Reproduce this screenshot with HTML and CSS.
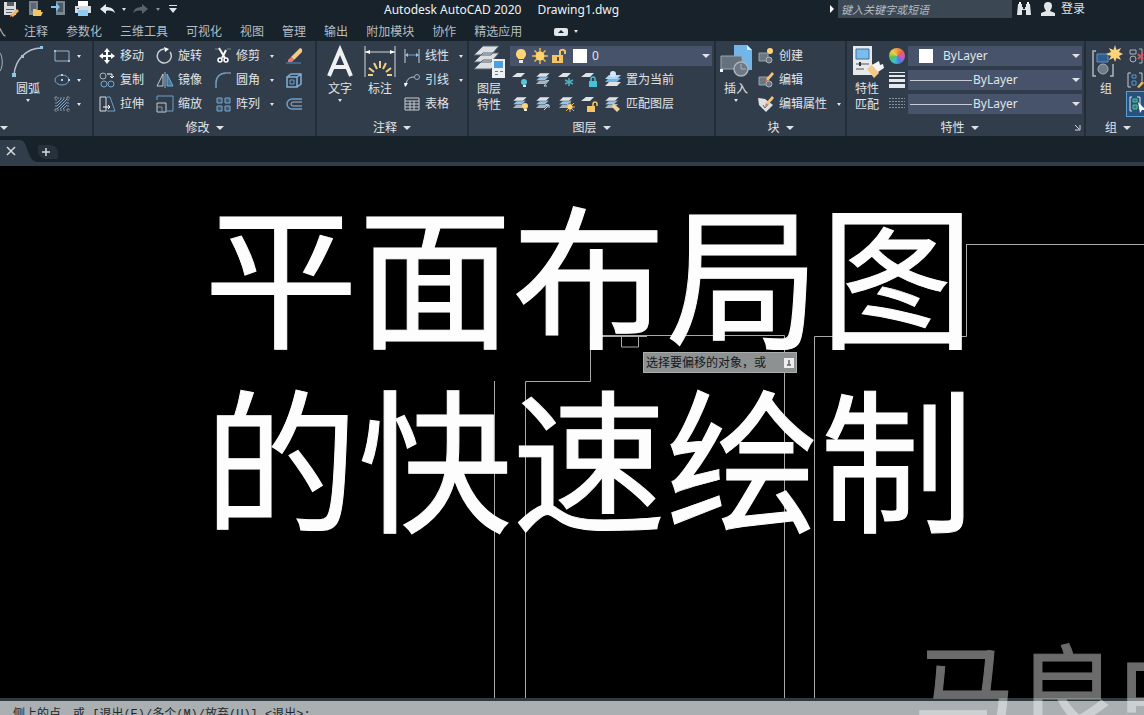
FILE: index.html
```html
<!DOCTYPE html>
<html lang="zh-CN">
<head>
    <meta charset="UTF-8">
    <meta name="viewport" content="width=device-width, initial-scale=1.0">
    <title>Autodesk AutoCAD 2020 Drawing1.dwg</title>
    <link rel="stylesheet" href="styles.css">
</head>
<body>
    <svg class="defs" aria-hidden="true">
        <symbol id="sheets" viewBox="0 0 18 18">
            <path d="M1 13l4-4h9l-4 4z" fill="#aeb6bd"/>
            <path d="M1 9.500l4-4h9l-4 4z" fill="#8ec6f0" stroke="#3a4656" stroke-width=".5"/>
            <path d="M1 6l4-4h10l-4 4z" fill="#e0e3e5" stroke="#3a4656" stroke-width=".5"/>
        </symbol>
        <symbol id="sheet" viewBox="0 0 18 18">
            <path d="M0 6l5-4h8l-4 4z" fill="#e0e3e5"/>
        </symbol>
        <symbol id="bulb" viewBox="0 0 18 18">
            <path d="M9 2a5 5 0 0 1 3 9v1H6v-1a5 5 0 0 1 3-9z" fill="#ffd577"/>
            <path d="M7 13h4v3H7z" fill="#e6e9eb"/>
        </symbol>
        <symbol id="sun" viewBox="0 0 18 18">
            <path d="M9 1v16M1 9h16M3.500 3.500l11 11M14.500 3.500l-11 11" stroke="#f2b84c" stroke-width="1.500"/>
            <circle cx="9" cy="9" r="4.500" fill="#ffd36b"/>
        </symbol>
        <symbol id="lock" viewBox="0 0 18 18">
            <path d="M10 8V4a3 3 0 0 1 5 0v3" fill="none" stroke="#f3c567" stroke-width="2"/>
            <path d="M2 8h11v8H2z" fill="#f3c567"/>
            <path d="M7 10h2v4H7z" fill="#5c5040"/>
        </symbol>
        <symbol id="pen" viewBox="0 0 18 18">
            <path d="M9 8l6-7 2 2-6 7z" fill="#f3c37a"/>
            <path d="M8 11l1-3 2 2z" fill="#e66a54"/>
        </symbol>
    </svg>

    <header class="titlebar">
        <div class="quick">
            <button aria-label="保存">
                <svg width="18" height="18" viewBox="0 0 18 18"><path d="M2 2h12v13H2z" fill="#d9dcdf"/><path d="M5 2h7v4H5zM4 9h8v1H4zM4 12h6v1H4z" fill="#55606b"/><path d="M8 15l7-6 2 2-6 6z" fill="#f0b565"/><path d="M8 17v-2l2 1z" fill="#e8705a"/></svg>
            </button>
            <button aria-label="打开">
                <svg width="18" height="18" viewBox="0 0 18 18"><path d="M3 1h9v14H3z" fill="#77828c"/><path d="M5 3h5v8H5z" fill="#5b6670"/><path d="M7 16V9h3l1 1h4v2h2l-2 4z" fill="#f3c567"/></svg>
            </button>
            <button aria-label="输入">
                <svg width="18" height="18" viewBox="0 0 18 18"><path d="M6 1h9v14H6z" fill="#7b8791"/><path d="M8 3h5v9H8z" fill="#4d5862"/><path d="M1 6h5V3l4 4-4 4V8H1z" fill="#7fc3ee"/></svg>
            </button>
            <button aria-label="打印">
                <svg width="18" height="18" viewBox="0 0 18 18"><path d="M4 1h10v5H4z" fill="#fff"/><path d="M1 6h16v7H1z" fill="#d5dade"/><path d="M4 10h10v6H4z" fill="#8fcaf2"/><path d="M3 8h2v1H3z" fill="#555"/></svg>
            </button>
            <button aria-label="放弃">
                <svg width="18" height="18" viewBox="0 0 18 18"><path d="M2 9l6-5v3c5 0 8 2 9 6-2-2-5-3-9-2v3z" fill="#e8ebed"/></svg>
            </button>
            <i class="down"></i>
            <button aria-label="重做">
                <svg width="18" height="18" viewBox="0 0 18 18"><path d="M16 9l-6-5v3c-5 0-8 2-9 6 2-2 5-3 9-2v3z" fill="#59636c"/></svg>
            </button>
            <i class="down dim"></i>
            <button class="custom" aria-label="自定义">
                <svg width="10" height="10" viewBox="0 0 10 10"><path d="M1 1h8v1H1zM1 4h8L5 9z" fill="#dfe3e6"/></svg>
            </button>
        </div>
        <div class="caption"><span>Autodesk AutoCAD 2020</span><span>Drawing1.dwg</span></div>
        <form class="search">
            <i class="right"></i>
            <input type="text" aria-label="搜索" placeholder="键入关键字或短语">
            <button type="button" aria-label="查找">
                <svg width="16" height="16" viewBox="0 0 16 16"><path d="M2 3h4v3h4V3h4l1 11h-5V9H6v5H1z" fill="#e3e6e8"/><path d="M3 1h2v2H3zM11 1h2v2h-2z" fill="#fff"/><path d="M7 6h2v2H7z" fill="#17222b"/></svg>
            </button>
            <button type="button" class="login">
                <svg width="16" height="16" viewBox="0 0 16 16"><path d="M4 5a4 4 0 0 1 8 0c0 3-2 4-2 5l5 2v3H1v-3l5-2c0-1-2-2-2-5z" fill="#e3e6e8"/></svg>
                登录
            </button>
        </form>
    </header>

    <nav class="tabs">
        <a href="#">插入</a>
        <a href="#">注释</a>
        <a href="#">参数化</a>
        <a href="#">三维工具</a>
        <a href="#">可视化</a>
        <a href="#">视图</a>
        <a href="#">管理</a>
        <a href="#">输出</a>
        <a href="#">附加模块</a>
        <a href="#">协作</a>
        <a href="#">精选应用</a>
        <button class="fold" aria-label="最小化功能区">
            <svg width="14" height="8" viewBox="0 0 14 8"><rect width="14" height="8" rx="2" fill="#e3e6e8"/><path d="M4 5h6L7 2z" fill="#17222b"/></svg>
            <i class="down"></i>
        </button>
    </nav>

    <section class="ribbon">
        <div class="panel draw">
            <div class="tools">
                <svg class="edge" width="4" height="24" viewBox="0 0 4 24"><path d="M0 3c3 4 3 14 0 18" fill="none" stroke="#aab4bd"/></svg>
                <button class="big">
                    <svg width="34" height="34" viewBox="0 0 34 34"><path d="M3 31C4 17 14 4 31 4" fill="none" stroke="#b7c0c8" stroke-width="1.500"/><path d="M1 29h4v4H1zM10 11h3v3h-3zM29 2h3v3h-3z" fill="#8fc4ea"/></svg>
                    圆弧<i class="down"></i>
                </button>
                <div class="rows">
                    <button aria-label="矩形"><svg width="18" height="18" viewBox="0 0 18 18"><path d="M2 4h14v10H2z" fill="none" stroke="#9fb2c4"/><path d="M1 3h2v2H1zM15 13h2v2h-2z" fill="#8fc4ea"/></svg><i class="down"></i></button>
                    <button aria-label="椭圆"><svg width="18" height="18" viewBox="0 0 18 18"><ellipse cx="9" cy="9" rx="7" ry="5" fill="none" stroke="#7fa3c4"/><path d="M8 8h2v2H8zM8 3h2v2H8zM15 8h2v2h-2z" fill="#a5d3f3"/></svg><i class="down"></i></button>
                    <button aria-label="图案填充"><svg width="18" height="18" viewBox="0 0 18 18"><path d="M3 1v16M15 1v16M1 3h16M1 15h16" stroke="#8795a3" stroke-dasharray="2 1"/><path d="M4 8l4-4M4 11l7-7M4 14L14 4M7 14l7-7M10 14l4-4" stroke="#78aad2"/></svg><i class="down"></i></button>
                </div>
            </div>
            <div class="name"><i class="down wide"></i></div>
        </div>

        <div class="panel modify">
            <div class="tools">
                <div class="rows">
                    <button><svg width="18" height="18" viewBox="0 0 18 18"><path d="M9 1l3 4h-2v3h3V6l4 3-4 3v-2h-3v3h2l-3 4-3-4h2v-3H5v2L1 9l4-3v2h3V5H6z" fill="#fff"/></svg>移动</button>
                    <button><svg width="18" height="18" viewBox="0 0 18 18"><g fill="none" stroke="#a9b5bf"><circle cx="5" cy="5" r="3"/><circle cx="6" cy="13" r="3" stroke="#75a9d3"/><circle cx="13" cy="13" r="3" stroke="#75a9d3"/><path d="M9 3h5v4M12 5l2 2 2-2" stroke="#fff"/></g></svg>复制</button>
                    <button><svg width="18" height="18" viewBox="0 0 18 18"><path d="M2 2h6v14H2z" fill="none" stroke="#d8dde1"/><path d="M9 2h3l5 14H9" fill="none" stroke="#6ba0cb"/><path d="M5 12h7M10 10l2 2-2 2" fill="none" stroke="#fff"/></svg>拉伸</button>
                </div>
                <div class="rows">
                    <button><svg width="18" height="18" viewBox="0 0 18 18"><path d="M14 5a7 7 0 1 1-6-3" fill="none" stroke="#c5ccd2" stroke-width="1.500"/><path d="M8 0l5 2-4 3z" fill="#fff"/></svg>旋转</button>
                    <button><svg width="18" height="18" viewBox="0 0 18 18"><path d="M7 3v12H1z" fill="none" stroke="#c5ccd2"/><path d="M11 3v12h6z" fill="#42749c" stroke="#78afd8"/><path d="M9 1v16" stroke="#9db9d0"/></svg>镜像</button>
                    <button><svg width="18" height="18" viewBox="0 0 18 18"><path d="M1 5V1h16v15h-6" fill="none" stroke="#6ba0cb"/><path d="M1 8h9v9H1z" fill="none" stroke="#c5ccd2"/><path d="M1 12h5v5" fill="none" stroke="#8995a1"/></svg>缩放</button>
                </div>
                <div class="rows trim">
                    <button><svg width="18" height="18" viewBox="0 0 18 18"><path d="M1 2h4M13 2h4" stroke="#75889a"/><path d="M5 1l6 10M12 3L8 11" stroke="#f4f6f7" stroke-width="2"/><circle cx="6" cy="13" r="2" fill="none" stroke="#fff" stroke-width="1.500"/><circle cx="12" cy="13" r="2" fill="none" stroke="#fff" stroke-width="1.500"/></svg>修剪<i class="down"></i></button>
                    <button><svg width="18" height="18" viewBox="0 0 18 18"><path d="M2 17v-5C2 6 6 2 12 2" fill="none" stroke="#6ba0cb" stroke-width="1.500"/><path d="M12 2h5" stroke="#aab5bf"/></svg>圆角<i class="down"></i></button>
                    <button><svg width="18" height="18" viewBox="0 0 18 18"><g fill="#3c5873" stroke="#78a6cc"><path d="M3 3h5v5H3zM11 3h5v5h-5zM3 11h5v5H3zM11 11h5v5h-5z"/></g></svg>阵列<i class="down"></i></button>
                </div>
                <div class="rows erase">
                    <button aria-label="删除"><svg width="18" height="18" viewBox="0 0 18 18"><path d="M6 10l9-9 2 1v3l-8 8z" fill="#f4cb84"/><path d="M6 10l3 3-2 2H3v-2z" fill="#e77b76"/><path d="M1 16h15" stroke="#4d8fc7"/></svg></button>
                    <button aria-label="分解"><svg width="18" height="18" viewBox="0 0 18 18"><path d="M2 6h10v10H2zM2 6l4-3h10v10l-4 3M12 6l4-3" fill="none" stroke="#80b0d5" stroke-width="1.500"/><path d="M5 9h4v4H5z" fill="none" stroke="#6ba0cb"/></svg></button>
                    <button aria-label="偏移"><svg width="18" height="18" viewBox="0 0 18 18"><path d="M17 4H7a5 5 0 0 0 0 10h10" fill="none" stroke="#6ba0cb" stroke-width="1.500"/><path d="M17 7H8a2 2 0 0 0 0 4h9" fill="none" stroke="#aab5bf"/></svg></button>
                </div>
            </div>
            <div class="name">修改<i class="down wide"></i></div>
        </div>

        <div class="panel annotate">
            <div class="tools">
                <button class="big">
                    <svg width="34" height="34" viewBox="0 0 34 34"><path d="M6 32L17 6l11 26M10 23h14" fill="none" stroke="#eef0f2" stroke-width="4"/></svg>
                    文字<i class="down"></i>
                </button>
                <button class="big">
                    <svg width="34" height="34" viewBox="0 0 34 34"><path d="M2 2v31M32 2v31M2 8h30" stroke="#d4d9dd"/><path d="M2 8l5-2v4zM32 8l-5-2v4z" fill="#fff"/><path d="M17 17v7M11 19l3 6M23 19l-3 6M6 24l5 4M28 24l-5 4M5 31h5M24 31h5" stroke="#f1cf87" stroke-width="2"/></svg>
                    标注
                </button>
                <div class="rows">
                    <button><svg width="18" height="18" viewBox="0 0 18 18"><path d="M2 2v14M16 2v14" stroke="#c6ccd1"/><path d="M3 8h12" stroke="#6ba0cb"/><path d="M2 8l3-2v4zM16 8l-3-2v4z" fill="#8fc4ea"/></svg>线性<i class="down"></i></button>
                    <button><svg width="18" height="18" viewBox="0 0 18 18"><path d="M3 15c0-6 3-9 8-9" fill="none" stroke="#c6ccd1"/><circle cx="14" cy="6" r="2.500" fill="none" stroke="#8fb0cb"/><path d="M1 12h4l-3 4z" fill="#fff"/></svg>引线<i class="down"></i></button>
                    <button><svg width="18" height="18" viewBox="0 0 18 18"><path d="M2 3h14v12H2zM2 6h14M2 9h14M2 12h14M7 6v9M11 6v9" fill="none" stroke="#c6ccd1"/></svg>表格</button>
                </div>
            </div>
            <div class="name">注释<i class="down wide"></i></div>
        </div>

        <div class="panel layers">
            <div class="tools">
                <button class="big">
                    <svg width="34" height="34" viewBox="0 0 34 34"><path d="M2 25l9-9h16l-8 9zM2 18l9-9h16l-8 9zM2 11l9-9h16l-8 9z" fill="#dcdfe1" stroke="#596470"/><path d="M20 15h13v19H20z" fill="#edf1f3"/><path d="M22 17h9v7h-9z" fill="#4c9fe0"/><path d="M23 27h3v1h-3zM28 27h3v1h-3zM23 30h3v1h-3z" fill="#6c757d"/></svg>
                    图层<br>特性
                </button>
                <div class="rows">
                    <div class="combo">
                        <svg width="18" height="18"><use href="#bulb"/></svg>
                        <svg width="18" height="18"><use href="#sun"/></svg>
                        <svg width="18" height="18"><use href="#lock"/></svg>
                        <i class="swatch"></i>
                        <select aria-label="图层"><option>0</option></select>
                        <i class="down wide"></i>
                    </div>
                    <div class="line">
                        <button aria-label="关"><svg width="18" height="18" viewBox="0 0 18 18"><use href="#sheet"/><circle cx="12" cy="11" r="3" fill="#5cc6d8"/><path d="M11 14h3v2h-3z" fill="#dce5e8"/></svg></button>
                        <button aria-label="隔离"><svg width="18" height="18" viewBox="0 0 18 18"><use href="#sheets"/><path d="M9 15l5-6M9 15h3" stroke="#b8daf4" fill="none"/></svg></button>
                        <button aria-label="冻结"><svg width="18" height="18" viewBox="0 0 18 18"><use href="#sheet"/><path d="M11 7v8M7 9l8 4M15 9l-8 4" stroke="#4fb0bf" stroke-width="1.500"/></svg></button>
                        <button aria-label="锁定"><svg width="18" height="18" viewBox="0 0 18 18"><use href="#sheet"/><path d="M8 10h8v6H8z" fill="#45c3d6"/><path d="M10 10V8a2 2 0 0 1 4 0v2" fill="none" stroke="#45c3d6" stroke-width="1.500"/></svg></button>
                        <button><svg width="18" height="18" viewBox="0 0 18 18"><path d="M1 15l4-4h12l-4 4z" fill="#e0e3e5"/><path d="M1 11l4-4h12l-4 4z" fill="#70b5ea"/><path d="M1 8l4-4h12l-4 4z" fill="#b3d7f2"/><circle cx="9" cy="3" r="3" fill="#d4eafa"/></svg>置为当前</button>
                    </div>
                    <div class="line">
                        <button aria-label="打开所有图层"><svg width="18" height="18" viewBox="0 0 18 18"><use href="#sheets"/><circle cx="13" cy="11" r="3" fill="#ffd577"/><path d="M12 14h3v2h-3z" fill="#eee"/></svg></button>
                        <button aria-label="取消隔离"><svg width="18" height="18" viewBox="0 0 18 18"><use href="#sheets"/><path d="M9 15l5-5M11 10h3v3" stroke="#b8daf4" fill="none"/></svg></button>
                        <button aria-label="解冻"><svg width="18" height="18" viewBox="0 0 18 18"><use href="#sheets"/><path d="M12 7v10M7 12h10M8 8l8 8M16 8l-8 8" stroke="#eeb54e"/><circle cx="12" cy="12" r="2.500" fill="#ffd577"/></svg></button>
                        <button aria-label="解锁"><svg width="18" height="18" viewBox="0 0 18 18"><use href="#sheet"/><path d="M6 11h8v6H6z" fill="#f3c567"/><path d="M12 11V9a2 2 0 0 1 4 0v2" fill="none" stroke="#f3c567" stroke-width="1.500"/></svg></button>
                        <button><svg width="18" height="18" viewBox="0 0 18 18"><use href="#sheets"/><path d="M9 8l7 6-3 3-5-5z" fill="#edd19b"/></svg>匹配图层</button>
                    </div>
                </div>
            </div>
            <div class="name">图层<i class="down wide"></i></div>
        </div>

        <div class="panel block">
            <div class="tools">
                <button class="big">
                    <svg width="34" height="34" viewBox="0 0 34 34"><path d="M15 1h13l5 5v20H15z" fill="#72b5e8"/><path d="M28 1v5h5z" fill="#d9eefc"/><path d="M2 12h21v13H2z" fill="#65717c" stroke="#9da8b1"/><circle cx="22" cy="25" r="7" fill="#6c7883" stroke="#aab4bc" stroke-width="1.500"/><path d="M22 20v5h5" fill="none" stroke="#aab4bc"/><path d="M1 25h3v3H1z" fill="#eef6fc"/></svg>
                    插入<i class="down"></i>
                </button>
                <div class="rows">
                    <button><svg width="18" height="18" viewBox="0 0 18 18"><path d="M2 6h9v8H2z" fill="#6c7782" stroke="#99a4ae"/><circle cx="12" cy="13" r="3" fill="#697580" stroke="#aab4bc"/><circle cx="13" cy="4" r="3" fill="#ffd577"/></svg>创建</button>
                    <button><svg width="18" height="18" viewBox="0 0 18 18"><path d="M2 6h9v8H2z" fill="#6c7782" stroke="#99a4ae"/><circle cx="12" cy="13" r="3" fill="#697580" stroke="#aab4bc"/><use href="#pen"/></svg>编辑</button>
                    <button><svg width="18" height="18" viewBox="0 0 18 18"><path d="M1 3l7 1 8 6-7 7-7-7z" fill="#dce0e3"/><path d="M6 10l2 3 4-5" fill="none" stroke="#56616c"/><use href="#pen"/></svg>编辑属性<i class="down"></i></button>
                </div>
            </div>
            <div class="name">块<i class="down wide"></i></div>
        </div>

        <div class="panel props">
            <div class="tools">
                <button class="big">
                    <svg width="34" height="34" viewBox="0 0 34 34"><path d="M3 2h19v29H3z" fill="#e7e9eb"/><path d="M6 5h13v10H6z" fill="#79bdf0" stroke="#3e6f99"/><path d="M6 20h13M6 25h8" stroke="#4a545e"/><path d="M9 18h2v4H9z" fill="#333"/><path d="M17 25l6-5 6 9-5 5z" fill="#f3c98a"/><path d="M22 21l7-4 1 4 3-1 1 4-6 4z" fill="#f4f4f4"/></svg>
                    特性<br>匹配
                </button>
                <div class="marks">
                    <i class="wheel"></i>
                    <svg width="18" height="18" viewBox="0 0 18 18"><path d="M1 1h16v1H1zM1 4h16v2H1zM1 8h16v3H1zM1 13h16v4H1z" fill="#e6e9eb"/></svg>
                    <svg width="18" height="18" viewBox="0 0 18 18"><path d="M1 3.500h16M1 6.500h16M1 9.500h16M1 12.500h16" stroke="#85909a" stroke-dasharray="2 1"/></svg>
                </div>
                <div class="rows">
                    <div class="combo">
                        <i class="swatch"></i>
                        <select aria-label="颜色"><option>ByLayer</option></select>
                        <i class="down wide"></i>
                    </div>
                    <div class="combo">
                        <i class="stroke"></i>
                        <select aria-label="线宽"><option>ByLayer</option></select>
                        <i class="down wide"></i>
                    </div>
                    <div class="combo">
                        <i class="stroke"></i>
                        <select aria-label="线型"><option>ByLayer</option></select>
                        <i class="down wide"></i>
                    </div>
                </div>
            </div>
            <div class="name">特性<i class="down wide"></i>
                <svg class="launch" width="7" height="7" viewBox="0 0 7 7"><path d="M1 1l4 4M6 1v5H1" fill="none" stroke="#d5dade"/></svg>
            </div>
        </div>

        <div class="panel group">
            <div class="tools">
                <button class="big">
                    <svg width="34" height="34" viewBox="0 0 34 34"><path d="M7 7H4v25h3M21 32h3V20" fill="none" stroke="#aeb7bf" stroke-width="1.500"/><path d="M8 10h11v8H8z" fill="#315e91" stroke="#5d93c9"/><circle cx="14" cy="25" r="5" fill="#6f7b86" stroke="#a5afb8"/><path d="M26 1l1.500 5L32 4l-2 4 4 2-4 2 2 4-4.500-2L26 18l-1.500-4-4.500 2 2-4-5-2 5-2-2-4 4.500 2z" fill="#ffd27c"/></svg>
                    组
                </button>
                <div class="rows">
                    <button aria-label="解除编组"><svg width="18" height="18" viewBox="0 0 18 18"><path d="M3 3h6v4H3zM12 2h3v14h-3" fill="none" stroke="#a9b4bd"/><circle cx="6" cy="12" r="3" fill="none" stroke="#a9b4bd"/><path d="M11 7l5 5M16 7l-5 5" stroke="#e14d56" stroke-width="2"/></svg></button>
                    <button aria-label="组编辑"><svg width="18" height="18" viewBox="0 0 18 18"><path d="M4 2H1v14h3M12 2h3v8" fill="none" stroke="#c4cbd1"/><path d="M5 4h4v3H5zM5 10h4v4H5z" fill="none" stroke="#4f9bd8"/><path d="M10 16l5-6 2 2-5 5z" fill="#f3b35f"/></svg></button>
                    <button class="on" aria-label="组选择"><svg width="18" height="18" viewBox="0 0 18 18"><path d="M5 2H3v14h2M10 2h3v8" fill="none" stroke="#dbe5ec"/><path d="M6 4h4v3H6zM6 10h4v4H6z" fill="#2d7d6c" stroke="#4fc09a"/><path d="M11 7l8 8h-4l-2 3z" fill="#fff"/></svg></button>
                </div>
            </div>
            <div class="name">组<i class="down wide"></i></div>
        </div>
    </section>

    <div class="files">
        <button class="file" aria-label="关闭">
            <svg width="10" height="10" viewBox="0 0 10 10"><path d="M1 1l8 8M9 1L1 9" stroke="#d5dade" stroke-width="1.500"/></svg>
        </button>
        <button class="add" aria-label="新图形">
            <svg width="10" height="10" viewBox="0 0 10 10"><path d="M5 1v8M1 5h8" stroke="#d5dade" stroke-width="1.500"/></svg>
        </button>
    </div>

    <main class="canvas">
        <svg class="plan" width="100%" height="100%">
            <g fill="none" stroke="#a8a8a8">
                <path d="M494.500 215v600"/>
                <path d="M525.500 815V215.500H590.500V169.500H784.500V815"/>
                <path d="M814.500 815V170.500H966.500V78.500"/>
                <line x1="966" y1="78.500" x2="100%" y2="78.500"/>
                <path d="M621.500 170v11h17v-11"/>
                <path d="M590 170h57" stroke-width="2"/>
            </g>
        </svg>
        <h1>平面布局图<br>的快速绘制</h1>
        <div class="tip">选择要偏移的对象，或
            <svg width="10" height="10" viewBox="0 0 10 10"><path d="M0 0h10v10H0z" fill="#eee"/><path d="M5 2v5M3 7h4" stroke="#666" stroke-width="1.500"/></svg>
        </div>
    </main>

    <footer class="command">侧上的点，或 [退出(E)/多个(M)/放弃(U)] &lt;退出&gt;:</footer>
    <div class="watermark">马良中</div>
</body>
</html>
```

FILE: styles.css
```css
*{
    box-sizing: border-box;
    margin: 0;
    padding: 0;
}
body{
    position: relative;
    height: 100vh;
    display: flex;
    flex-direction: column;
    overflow: hidden;
    background-color: #17222b;
    color: #e0e4e7;
    font-family: "Noto Sans", "Noto Sans CJK SC", sans-serif;
    font-size: 12px;
    line-height: 16px;
}
button, input, select{
    font: inherit;
    color: inherit;
    background: none;
    border: none;
    outline: none;
}
button{
    display: flex;
    align-items: center;
    white-space: nowrap;
}
svg{
    flex: none;
    display: block;
}
.defs{
    position: absolute;
    width: 0;
    height: 0;
}

/* small triangles */
.down, .right{
    flex: none;
    width: 0;
    height: 0;
    border: 2px solid transparent;
    border-top: 3px solid #dfe3e6;
    border-bottom: none;
}
.down.wide{
    border-width: 4px;
    border-bottom: none;
}
.down.dim{
    border-top-color: #87919a;
}
.right{
    border: 4px solid transparent;
    border-left-color: #fff;
    border-right: none;
}

.titlebar{
    flex: none;
    height: 22px;
    display: flex;
    align-items: flex-start;
}
.quick{
    flex: none;
    width: 384px;
    height: 18px;
    padding-left: 2px;
    display: flex;
    align-items: center;
    gap: 6px;
}
.custom{
    margin-left: 2px;
}
.caption{
    display: flex;
    gap: 16px;
    line-height: 20px;
    color: #f0f2f3;
    white-space: nowrap;
}
.search{
    height: 18px;
    margin-left: auto;
    padding-right: 59px;
    display: flex;
    align-items: center;
    gap: 4px;
}
.search input{
    width: 174px;
    height: 18px;
    padding: 0 3px;
    background-color: #3b4854;
    font-size: 11px;
    font-style: italic;
}
.search input::placeholder{
    color: #b4bcc3;
}
.login{
    margin-left: 4px;
    gap: 5px;
}

.tabs{
    flex: none;
    height: 19px;
    margin-left: -18px;
    display: flex;
    align-items: center;
    gap: 18px;
}
.tabs a{
    color: #b5bdc4;
    text-decoration: none;
    white-space: nowrap;
}
.fold{
    margin-left: 14px;
    gap: 6px;
}

.ribbon{
    flex: none;
    display: flex;
    background-color: #323d4b;
}
.panel{
    flex: none;
    border-right: 2px solid #222d38;
    overflow: hidden;
}
.tools{
    height: 78px;
    padding-top: 3px;
    display: flex;
}
.name{
    position: relative;
    height: 17px;
    display: flex;
    align-items: center;
    justify-content: center;
    gap: 6px;
}
.rows, .marks{
    display: grid;
    grid-template-rows: repeat(3, 24px);
    align-content: start;
    align-items: center;
}
.rows button{
    height: 24px;
    gap: 4px;
}
.rows .down:not(.wide){
    margin-left: 6px;
}
.big{
    flex: none;
    width: 40px;
    height: 72px;
    flex-direction: column;
}
.big svg{
    margin-bottom: 3px;
}
.big .down{
    margin-top: 2px;
}
.draw{
    width: 94px;
}
.draw .edge{
    margin-top: 6px;
}
.draw .big{
    width: 48px;
}
.draw .rows{
    padding-left: 1px;
}
.draw .rows button{
    gap: 0;
}
.draw .name{
    justify-content: flex-start;
}
.modify{
    width: 223px;
}
.modify .tools{
    padding-left: 4px;
}
.modify .rows{
    flex: none;
    width: 58px;
}
.modify .trim{
    width: 71px;
}
.modify .erase{
    width: 20px;
}
.annotate{
    width: 152px;
}
.annotate .tools{
    padding-left: 3px;
}
.annotate .rows{
    padding-left: 3px;
}
.layers{
    width: 247px;
}
.layers .rows{
    flex: 1;
    padding: 0 2px 0 1px;
}
.line{
    display: flex;
    gap: 5px;
    padding-left: 2px;
}
.combo{
    height: 20px;
    padding: 0 2px;
    display: flex;
    align-items: center;
    gap: 1px;
    background-color: #46536a;
}
.combo select{
    flex: 1;
    min-width: 0;
    appearance: none;
}
.swatch{
    width: 14px;
    height: 14px;
    margin: 0 4px;
    background-color: #fff;
}
.block{
    width: 131px;
}
.block .rows{
    padding-left: 1px;
}
.props{
    width: 239px;
}
.marks{
    width: 20px;
    justify-items: center;
}
.props .rows{
    flex: 1;
    padding: 0 2px 0 1px;
}
.props .swatch{
    margin: 0 9px;
}
.props .name{
    padding-right: 12px;
}
.wheel{
    width: 16px;
    height: 16px;
    border-radius: 50%;
    background: conic-gradient(#f0a03c, #e9604d, #c45cc8, #4a7fe0, #3fc4c8, #57c35a, #e8d34c, #f0a03c);
}
.stroke{
    width: 62px;
    height: 1px;
    background-color: #c9cfd4;
}
.launch{
    position: absolute;
    right: 3px;
    bottom: 5px;
}
.group{
    flex: 1;
    border-right: none;
}
.group .name{
    padding-left: 6px;
}
.group .rows{
    padding-left: 1px;
}
.group .on{
    background-color: #28527b;
    outline: 1px solid #5c9fd6;
}

.files{
    flex: none;
    height: 30px;
    display: flex;
    border-bottom: 4px solid #323d4b;
}
.file{
    width: 38px;
    height: 22px;
    margin-top: 4px;
    padding-left: 6px;
    background-color: #323d4b;
    clip-path: path("M0 0H20C29 0 26 22 38 22H0z");
}
.add{
    width: 20px;
    height: 14px;
    margin-top: 9px;
    padding-left: 3px;
    background-color: #26313b;
    border-radius: 2px 8px 2px 8px;
}

.canvas{
    position: relative;
    flex: 1;
    min-height: 0;
    padding: 12px 0 0 204px;
    overflow: hidden;
    background-color: #000;
}
.plan{
    position: absolute;
    top: 0;
    left: 0;
}
h1{
    position: relative;
    color: #fdfdfd;
    font-family: "Noto Sans CJK SC", sans-serif;
    font-size: 154px;
    font-weight: 400;
    line-height: 184px;
    white-space: nowrap;
    -webkit-text-stroke: 1px #fdfdfd;
}
.tip{
    position: absolute;
    top: 186px;
    left: 643px;
    width: 154px;
    height: 21px;
    padding: 0 2px;
    display: flex;
    align-items: center;
    justify-content: space-between;
    background-color: #8d9192;
    border: 1px solid #a9adae;
    color: #15191c;
    white-space: nowrap;
}
.command{
    flex: none;
    height: 17px;
    padding: 6px 13px 0;
    overflow: hidden;
    border-top: 3px solid #30393d;
    background-color: #aaafb1;
    color: #23282b;
    font-family: "Liberation Mono", "Noto Sans CJK SC", monospace;
    white-space: nowrap;
}
.watermark{
    position: absolute;
    left: 914px;
    top: 627px;
    color: #fff;
    opacity: .42;
    font-family: "Noto Sans CJK SC", sans-serif;
    font-size: 102px;
    line-height: 120px;
    white-space: nowrap;
    -webkit-text-stroke: 1px #fff;
}
```
